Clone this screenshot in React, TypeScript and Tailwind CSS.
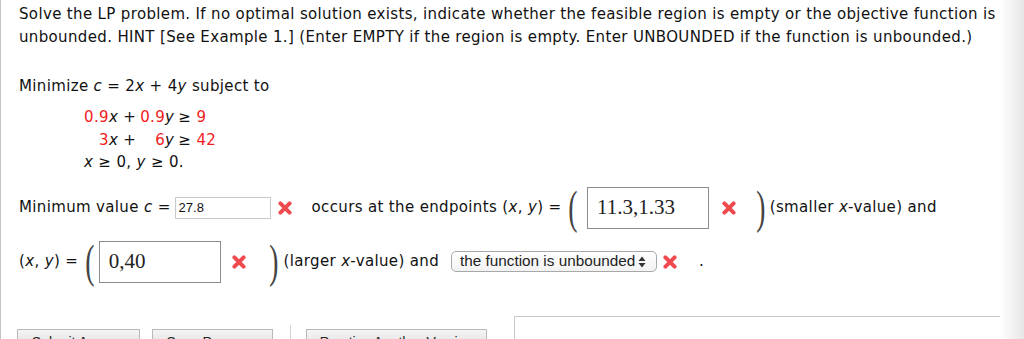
import React from 'react';

const body = { fontFamily: '"DejaVu Sans", Verdana, sans-serif' };
const arial = { fontFamily: '"Liberation Sans", Arial, sans-serif' };
const serif = { fontFamily: '"Liberation Serif", "Times New Roman", serif' };

function RedX() {
  return (
    <svg width="14" height="14" viewBox="0 0 14 14" className="shrink-0 block">
      <path d="M2.4 2.4 L11.6 11.6 M11.6 2.4 L2.4 11.6" stroke="#ef4b4f" strokeWidth="4" strokeLinecap="round" />
    </svg>
  );
}

function Paren({ side }: { side: 'l' | 'r' }) {
  return (
    <span className="text-[46px] leading-none text-[#444] font-light scale-x-[0.6] inline-block" style={serif}>
      {side === 'l' ? '(' : ')'}
    </span>
  );
}

function BigInput({ value }: { value: string }) {
  return (
    <div className="h-[42px] w-[122px] border border-[#8c8c8c] flex items-center pl-[9px] text-[21px] text-[#222] tracking-normal" style={serif}>
      {value}
    </div>
  );
}

export default function App() {
  return (
    <div className="w-[1024px] h-[339px] overflow-hidden bg-white flex text-[15px] tracking-[0.35px] text-[#111]" style={body}>
      <div className="flex-1 border-l border-[#c4c4c4] pl-[18px] pt-[3px] flex flex-col">
        <p className="leading-[23px] whitespace-nowrap">
          Solve the LP problem. If no optimal solution exists, indicate whether the feasible region is empty or the objective function is
          <br />
          unbounded. HINT [See Example 1.] (Enter EMPTY if the region is empty. Enter UNBOUNDED if the function is unbounded.)
        </p>

        <p className="leading-[23px] mt-[26px]">
          Minimize <i>c</i> = 2<i>x</i> + 4<i>y</i> subject to
        </p>

        <div className="ml-[65px] mt-[8px] leading-[22.5px]">
          <div className="grid grid-cols-[auto_auto_auto] w-fit">
            <span className="text-right"><span className="text-[#f02020]">0.9</span><i>x</i> +</span>
            <span className="text-right pl-[4px]"><span className="text-[#f02020]">0.9</span><i>y</i></span>
            <span className="pl-[4px]">≥ <span className="text-[#f02020]">9</span></span>
            <span className="text-right"><span className="text-[#f02020]">3</span><i>x</i> +</span>
            <span className="text-right pl-[4px]"><span className="text-[#f02020]">6</span><i>y</i></span>
            <span className="pl-[4px]">≥ <span className="text-[#f02020]">42</span></span>
          </div>
          <div><i>x</i> ≥ 0, <i>y</i> ≥ 0.</div>
        </div>

        <div className="flex items-center h-[42px] mt-[13px]">
          <span>Minimum value <i>c</i> = </span>
          <div className="ml-[4px] h-[22px] w-[96px] border border-[#c8c8c8] flex items-center pl-[3px] text-[13px] tracking-normal" style={arial}>
            27.8
          </div>
          <span className="ml-[7px]"><RedX /></span>
          <span className="ml-[20px]">occurs at the endpoints (<i>x</i>, <i>y</i>) =</span>
          <span className="ml-[4px]"><Paren side="l" /></span>
          <span className="ml-[6px]"><BigInput value="11.3,1.33" /></span>
          <span className="ml-[13px]"><RedX /></span>
          <span className="ml-[17px]"><Paren side="r" /></span>
          <span className="ml-[1px]">(smaller <i>x</i>-value) and</span>
        </div>

        <div className="flex items-center h-[42px] mt-[12px]">
          <span>(<i>x</i>, <i>y</i>) =</span>
          <span className="ml-[4px]"><Paren side="l" /></span>
          <span className="ml-[1px]"><BigInput value="0,40" /></span>
          <span className="ml-[11px]"><RedX /></span>
          <span className="ml-[20px]"><Paren side="r" /></span>
          <span className="ml-[2px]">(larger <i>x</i>-value) and</span>
          <div className="ml-[12px] h-[21px] w-[206px] rounded-[5px] border border-[#a8a8a8] bg-gradient-to-b from-white to-[#f2f2f2] flex items-center gap-[3px] pl-[8px] text-[15.3px] text-[#222] tracking-normal" style={arial}>
            <span>the function is unbounded</span>
            <svg width="8" height="12" viewBox="0 0 8 12">
              <path d="M4 0.5 L7.5 5 H0.5 Z M4 11.5 L7.5 7 H0.5 Z" fill="#333" />
            </svg>
          </div>
          <span className="ml-[6px]"><RedX /></span>
          <span className="ml-[22px]">.</span>
        </div>

        <div className="flex mt-[33px] items-start">
          <div className="flex items-start mt-[13px] gap-[12px] ml-[-2px] text-[14px] text-[#222] tracking-normal" style={arial}>
            <button className="h-[24px] w-[123px] border border-[#b8b8b8] bg-gradient-to-b from-[#f4f4f4] to-[#dcdcdc] pt-[2px]">Submit Answer</button>
            <button className="h-[24px] w-[121px] border border-[#b8b8b8] bg-gradient-to-b from-[#f4f4f4] to-[#dcdcdc] pt-[2px]">Save Progress</button>
            <div className="w-px h-[20px] bg-[#d4d4d4] ml-[5px] mr-[3px] mt-[-4px]" />
            <button className="h-[24px] w-[181px] border border-[#b8b8b8] bg-gradient-to-b from-[#f4f4f4] to-[#dcdcdc] pt-[2px]">Practice Another Version</button>
          </div>
          <div className="ml-[27px] flex-1 h-[40px] border-t border-l border-[#c8c8c8]" />
        </div>
      </div>
      <div className="w-[24px] bg-gradient-to-r from-white to-[#e6e6e6]" />
    </div>
  );
}
